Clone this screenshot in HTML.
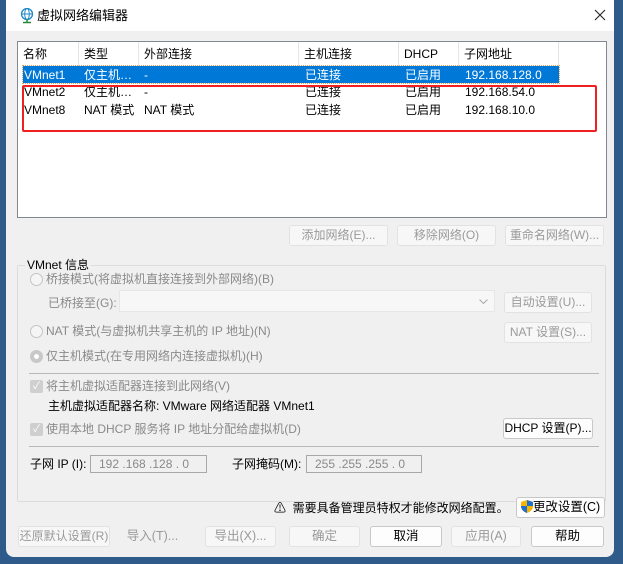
<!DOCTYPE html>
<html><head><meta charset="utf-8"><style>
*{margin:0;padding:0;box-sizing:border-box}
body{width:623px;height:564px;background:#2f5b8a;position:relative;overflow:hidden;font-family:"Liberation Sans","Noto Sans CJK SC",sans-serif;font-size:12px;color:#000}
.win{position:absolute;left:6px;top:0;width:608px;height:557px;background:#f0f0f0;border-radius:0 0 8px 8px;overflow:hidden}
.title{position:absolute;left:0;top:0;width:608px;height:31px;background:#fff}
.a{position:absolute;white-space:nowrap;line-height:16px}
.g{color:#8a8a8a}
.btn{position:absolute;height:21px;border:1px solid #e2e2e2;background:#f7f7f7;border-radius:3px;text-align:center;line-height:19px;color:#9a9a9a;white-space:nowrap;overflow:hidden}
.btn.en{border-color:#c8c8c8;background:#fdfdfd;color:#000}
.list{position:absolute;left:11px;top:41px;width:590px;height:177px;background:#fff;border:1px solid #828790}
.hd{position:absolute;top:0;height:24px;border-right:1px solid #e5e5e5;padding-left:5px;line-height:24px}
.radio{position:absolute;width:13px;height:13px;border:1px solid #c4c4c4;border-radius:50%;background:#f5f5f5}
.chk{position:absolute;width:13px;height:13px;background:#cfcfcf;border-radius:2px;color:#fff;font-size:10px;line-height:13px;text-align:center}
.inp{position:absolute;height:18px;border:1px solid #a8a8a8;background:#f0f0f0;color:#8a8a8a;line-height:16px;padding-left:8px}
</style></head><body>
<div class="win">
 <div class="title">
  <svg style="position:absolute;left:14px;top:8px" width="14" height="16" viewBox="0 0 14 16"><circle cx="7" cy="6" r="5.5" fill="none" stroke="#1e88c8" stroke-width="1.3"/><ellipse cx="7" cy="6" rx="2.3" ry="5.5" fill="none" stroke="#1e88c8"/><line x1="1.5" y1="6" x2="12.5" y2="6" stroke="#1e88c8"/><line x1="7" y1="11.5" x2="7" y2="14" stroke="#2a8a3a" stroke-width="1.5"/><line x1="3" y1="14.5" x2="11" y2="14.5" stroke="#2a8a3a" stroke-width="1.5"/></svg>
  <div class="a" style="left:31px;top:8px;font-size:13px">虚拟网络编辑器</div>
  <svg style="position:absolute;left:588px;top:9px" width="12" height="12" viewBox="0 0 12 12"><path d="M1 1L11 11M11 1L1 11" stroke="#222" stroke-width="1.1"/></svg>
 </div>
 <div class="list">
  <div class="hd" style="left:0;width:61px">名称</div>
  <div class="hd" style="left:61px;width:60px">类型</div>
  <div class="hd" style="left:121px;width:160px">外部连接</div>
  <div class="hd" style="left:281px;width:100px">主机连接</div>
  <div class="hd" style="left:381px;width:60px">DHCP</div>
  <div class="hd" style="left:441px;width:100px">子网地址</div>
  <div style="position:absolute;left:5px;top:24px;width:536px;height:17px;background:#0078d7;outline:1px dotted #e0a060"></div>
  <div class="a" style="left:6px;top:25px;color:#fff">VMnet1</div><div class="a" style="left:66px;top:25px;color:#fff">仅主机…</div><div class="a" style="left:126px;top:25px;color:#fff">-</div><div class="a" style="left:287px;top:25px;color:#fff">已连接</div><div class="a" style="left:387px;top:25px;color:#fff">已启用</div><div class="a" style="left:447px;top:25px;color:#fff">192.168.128.0</div>
  <div class="a" style="left:6px;top:42px">VMnet2</div><div class="a" style="left:66px;top:42px">仅主机…</div><div class="a" style="left:126px;top:42px">-</div><div class="a" style="left:287px;top:42px">已连接</div><div class="a" style="left:387px;top:42px">已启用</div><div class="a" style="left:447px;top:42px">192.168.54.0</div>
  <div class="a" style="left:6px;top:60px">VMnet8</div><div class="a" style="left:66px;top:60px">NAT 模式</div><div class="a" style="left:126px;top:60px">NAT 模式</div><div class="a" style="left:287px;top:60px">已连接</div><div class="a" style="left:387px;top:60px">已启用</div><div class="a" style="left:447px;top:60px">192.168.10.0</div>
  <div style="position:absolute;left:4px;top:43px;width:575px;height:47px;border:2px solid #f02020;border-radius:2px"></div>
 </div>
 <div class="btn" style="left:283px;top:225px;width:99px">添加网络(E)...</div>
 <div class="btn" style="left:391px;top:225px;width:99px">移除网络(O)</div>
 <div class="btn" style="left:499px;top:225px;width:99px">重命名网络(W)...</div>
 <div style="position:absolute;left:11px;top:265px;width:589px;height:237px;border:1px solid #dcdcdc;border-radius:2px"></div>
 <div class="a" style="left:19px;top:257px;background:#f0f0f0;padding:0 2px;color:#000;font-size:12px">VMnet 信息</div>
 <div class="radio" style="left:24px;top:273px"></div><div class="a g" style="left:40px;top:271px">桥接模式(将虚拟机直接连接到外部网络)(B)</div>
 <div class="a g" style="left:42px;top:295px">已桥接至(G):</div>
 <div style="position:absolute;left:113px;top:290px;width:376px;height:22px;background:#f7f7f7;border:1px solid #e6e6e6"><svg style="position:absolute;right:6px;top:8px" width="9" height="5" viewBox="0 0 9 5"><path d="M0.5 0.5L4.5 4.5L8.5 0.5" fill="none" stroke="#aaa"/></svg></div>
 <div class="btn" style="left:498px;top:292px;width:88px">自动设置(U)...</div>
 <div class="radio" style="left:24px;top:325px"></div><div class="a g" style="left:40px;top:323px">NAT 模式(与虚拟机共享主机的 IP 地址)(N)</div>
 <div class="btn" style="left:498px;top:322px;width:88px">NAT 设置(S)...</div>
 <div class="radio" style="left:24px;top:350px;background:#fff;border:4px solid #c8c8c8"></div><div class="a g" style="left:40px;top:348px">仅主机模式(在专用网络内连接虚拟机)(H)</div>
 <div style="position:absolute;left:23px;top:373px;width:570px;height:1px;background:#b8b8b8"></div>
 <div class="chk" style="left:24px;top:380px">✓</div><div class="a g" style="left:40px;top:378px">将主机虚拟适配器连接到此网络(V)</div>
 <div class="a" style="left:42px;top:398px">主机虚拟适配器名称: VMware 网络适配器 VMnet1</div>
 <div class="chk" style="left:24px;top:423px">✓</div><div class="a g" style="left:40px;top:421px">使用本地 DHCP 服务将 IP 地址分配给虚拟机(D)</div>
 <div class="btn en" style="left:497px;top:418px;width:90px">DHCP 设置(P)...</div>
 <div style="position:absolute;left:23px;top:446px;width:570px;height:1px;background:#b8b8b8"></div>
 <div class="a" style="left:24px;top:456px">子网 IP (I):</div>
 <div class="inp" style="left:84px;top:455px;width:117px">192 .168 .128 .  0</div>
 <div class="a" style="left:226px;top:456px">子网掩码(M):</div>
 <div class="inp" style="left:300px;top:455px;width:116px">255 .255 .255 .  0</div>
 <div class="a" style="left:268px;top:500px;font-size:12px">⚠&nbsp; 需要具备管理员特权才能修改网络配置。</div>
 <div class="btn en" style="left:510px;top:497px;width:89px;font-size:12.5px"><svg width="12" height="13" viewBox="0 0 12 13" style="vertical-align:-2px"><path d="M6 0L12 2V6C12 9.5 9 12 6 13C3 12 0 9.5 0 6V2Z" fill="#f7b500"/><path d="M6 0L12 2V6H6ZM6 6H0C0 9.5 3 12 6 13Z" fill="#1f6fd0"/></svg>更改设置(C)</div>
 <div class="btn" style="left:12px;top:526px;width:92px;font-size:12px">还原默认设置(R)</div>
 <div class="btn" style="left:116px;top:526px;width:61px;font-size:12.5px;border-color:transparent;background:transparent">导入(T)...</div>
 <div class="btn" style="left:199px;top:526px;width:71px;font-size:12.5px">导出(X)...</div>
 <div class="btn" style="left:283px;top:526px;width:71px;font-size:12.5px">确定</div>
 <div class="btn en" style="left:364px;top:526px;width:72px;font-size:12.5px">取消</div>
 <div class="btn" style="left:445px;top:526px;width:70px;font-size:12.5px">应用(A)</div>
 <div class="btn en" style="left:525px;top:526px;width:73px;font-size:12.5px">帮助</div>
</div>
</body></html>
